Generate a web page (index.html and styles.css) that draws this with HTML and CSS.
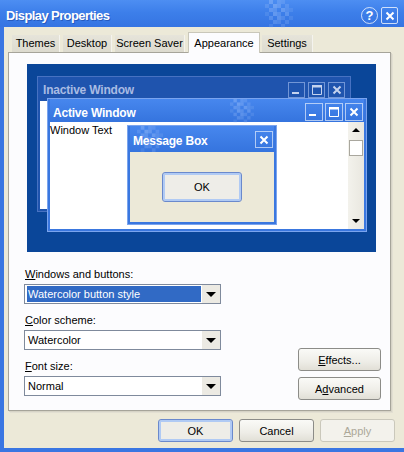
FILE: index.html
```html
<!DOCTYPE html>
<html>
<head>
    <title>Display Properties</title>
    <meta name="viewport" content="width=device-width, initial-scale=1">
    <link rel="stylesheet" href="styles.css">
</head>
<body>

<!-- shared glyphs -->
<svg class="defs" width="0" height="0">
    <defs>
        <symbol id="dither" viewBox="0 0 28 28">
            <g fill="#a9c8fb">
                <rect x="4" y="0" width="4" height="4" opacity=".35"/>
                <rect x="12" y="0" width="4" height="4" opacity=".25"/>
                <rect x="16" y="0" width="4" height="4" opacity=".2"/>
                <rect x="0" y="4" width="4" height="4" opacity=".2"/>
                <rect x="8" y="4" width="4" height="4" opacity=".4"/>
                <rect x="12" y="4" width="4" height="4" opacity=".3"/>
                <rect x="20" y="4" width="4" height="4" opacity=".2"/>
                <rect x="4" y="8" width="4" height="4" opacity=".3"/>
                <rect x="8" y="8" width="4" height="4" opacity=".25"/>
                <rect x="16" y="8" width="4" height="4" opacity=".35"/>
                <rect x="20" y="8" width="4" height="4" opacity=".2"/>
                <rect x="24" y="8" width="4" height="4" opacity=".15"/>
                <rect x="0" y="12" width="4" height="4" opacity=".15"/>
                <rect x="8" y="12" width="4" height="4" opacity=".35"/>
                <rect x="12" y="12" width="4" height="4" opacity=".25"/>
                <rect x="20" y="12" width="4" height="4" opacity=".3"/>
                <rect x="4" y="16" width="4" height="4" opacity=".25"/>
                <rect x="12" y="16" width="4" height="4" opacity=".3"/>
                <rect x="16" y="16" width="4" height="4" opacity=".2"/>
                <rect x="24" y="16" width="4" height="4" opacity=".15"/>
                <rect x="8" y="20" width="4" height="4" opacity=".25"/>
                <rect x="12" y="20" width="4" height="4" opacity=".2"/>
                <rect x="20" y="20" width="4" height="4" opacity=".2"/>
                <rect x="4" y="24" width="4" height="4" opacity=".15"/>
                <rect x="16" y="24" width="4" height="4" opacity=".2"/>
            </g>
        </symbol>
        <symbol id="glyph-close" viewBox="0 0 10 10">
            <path d="M1.5 1.5L8.5 8.5M8.5 1.5L1.5 8.5" stroke="currentColor" stroke-width="2" fill="none"/>
        </symbol>
        <symbol id="glyph-min" viewBox="0 0 10 10">
            <rect x="0" y="7" width="7" height="2" fill="currentColor"/>
        </symbol>
        <symbol id="glyph-max" viewBox="0 0 10 10">
            <path d="M0.5 1.5H9.5V9.5H0.5Z" stroke="currentColor" stroke-width="1" fill="none"/>
            <rect x="0" y="0" width="10" height="2.5" fill="currentColor"/>
        </symbol>
    </defs>
</svg>

<div class="window">
    <div class="titlebar">
        <svg class="dither main-dither"><use href="#dither"/></svg>
        <span class="title">Display Properties</span>
        <div class="caption">
            <span class="cap-btn help">?</span>
            <span class="cap-btn close"><svg><use href="#glyph-close"/></svg></span>
        </div>
    </div>

    <div class="client">
        <div class="tabs">
            <div class="tab tab-themes">Themes</div>
            <div class="tab tab-desktop">Desktop</div>
            <div class="tab tab-saver">Screen Saver</div>
            <div class="tab tab-appearance selected">Appearance</div>
            <div class="tab tab-settings">Settings</div>
        </div>

        <div class="panel">
            <div class="preview">
                <div class="pv-win inactive">
                    <div class="pv-title">
                        <span class="pv-caption">Inactive Window</span>
                        <div class="pv-buttons">
                            <span class="pv-btn"><svg><use href="#glyph-min"/></svg></span>
                            <span class="pv-btn"><svg><use href="#glyph-max"/></svg></span>
                            <span class="pv-btn"><svg><use href="#glyph-close"/></svg></span>
                        </div>
                    </div>
                    <div class="pv-body"></div>
                </div>

                <div class="pv-win active">
                    <div class="pv-title">
                        <svg class="dither"><use href="#dither"/></svg>
                        <span class="pv-caption">Active Window</span>
                        <div class="pv-buttons">
                            <span class="pv-btn"><svg><use href="#glyph-min"/></svg></span>
                            <span class="pv-btn"><svg><use href="#glyph-max"/></svg></span>
                            <span class="pv-btn"><svg><use href="#glyph-close"/></svg></span>
                        </div>
                    </div>
                    <div class="pv-body">
                        <div class="pv-text">Window Text</div>
                        <div class="scrollbar">
                            <div class="sb-arrow"><span class="arrow-up"></span></div>
                            <div class="sb-thumb"></div>
                            <div class="sb-track"></div>
                            <div class="sb-arrow"><span class="arrow-down"></span></div>
                        </div>
                    </div>
                </div>

                <div class="pv-win msgbox">
                    <div class="pv-title">
                        <svg class="dither"><use href="#dither"/></svg>
                        <span class="pv-caption">Message Box</span>
                        <div class="pv-buttons">
                            <span class="pv-btn"><svg><use href="#glyph-close"/></svg></span>
                        </div>
                    </div>
                    <div class="msg-body">
                        <div class="btn default msg-ok">OK</div>
                    </div>
                </div>
            </div>

            <div class="options">
                <div class="fields">
                    <label class="field-label"><u>W</u>indows and buttons:</label>
                    <div class="combo">
                        <div class="value"><span class="highlight">Watercolor button style</span></div>
                        <div class="drop"><span class="arrow-down big"></span></div>
                    </div>

                    <label class="field-label"><u>C</u>olor scheme:</label>
                    <div class="combo">
                        <div class="value"><span>Watercolor</span></div>
                        <div class="drop"><span class="arrow-down big"></span></div>
                    </div>

                    <label class="field-label"><u>F</u>ont size:</label>
                    <div class="combo">
                        <div class="value"><span>Normal</span></div>
                        <div class="drop"><span class="arrow-down big"></span></div>
                    </div>
                </div>

                <div class="side-buttons">
                    <div class="btn side"><u>E</u>ffects...</div>
                    <div class="btn side">A<u>d</u>vanced</div>
                </div>
            </div>
        </div>

        <div class="dialog-buttons">
            <div class="btn default">OK</div>
            <div class="btn">Cancel</div>
            <div class="btn disabled"><u>A</u>pply</div>
        </div>
    </div>
</div>

</body>
</html>
```

FILE: styles.css
```css
* { box-sizing: border-box; }
body { margin: 0; font-family: "Liberation Sans", Arial, sans-serif; font-size: 11px; color: #000; background: #ece9d8; }
.defs { position: absolute; }

/* outer frame */
.window { width: 404px; height: 452px; display: flex; flex-direction: column; background: #3a76e2; }
.titlebar { position: relative; height: 27px; display: flex; align-items: flex-start; background: linear-gradient(#4d8ef2, #3d7fea 45%, #3574e2); }
.title { position: relative; margin: 8px 0 0 6px; line-height: 15px; font-size: 13px; font-weight: bold; letter-spacing: -0.6px; color: #fff; text-shadow: 1px 1px 0 rgba(20, 60, 150, 0.5); }
.dither { position: absolute; top: 0; width: 28px; height: 28px; pointer-events: none; }
.main-dither { left: 265px; }
.caption { position: relative; display: flex; gap: 3px; margin: 7px 6px 0 auto; }
.cap-btn { width: 17px; height: 17px; display: flex; align-items: center; justify-content: center; border: 1px solid rgba(255, 255, 255, 0.75); color: #fff; }
.cap-btn.help { border-radius: 50%; font-size: 13px; font-weight: bold; line-height: 15px; }
.cap-btn.close { border-radius: 2px; }
.cap-btn svg { width: 10px; height: 10px; }

.client { flex: 1; display: flex; flex-direction: column; margin: 0 0 4px 4px; background: #ece9d8; }

/* tab strip */
.tabs { display: flex; align-items: flex-end; gap: 3px; height: 21px; margin: 5px 0 0 8px; }
.tab { height: 17px; margin-bottom: 1px; text-align: center; line-height: 17px; white-space: nowrap; background: linear-gradient(#e6e4da, #dddbcf); border-right: 1px solid #f4f3ee; }
.tab-themes { width: 48px; }
.tab-desktop { width: 49px; }
.tab-saver { width: 70px; }
.tab-appearance { width: 72px; }
.tab-settings { width: 51px; margin-left: -1px; }
.tab.selected { position: relative; z-index: 1; height: 21px; margin-bottom: 0; line-height: 20px; background: #fcfcfe; border: 1px solid #c9c7ba; border-bottom: none; }

.panel { position: relative; width: 383px; height: 359px; margin: -1px 0 0 4px; background: #fcfcfe; border: 1px solid #a6a49a; box-shadow: 1px 1px 0 #d6d3c6, 2px 2px 0 #e2dfd2; }

/* scheme preview */
.preview { position: relative; width: 349px; height: 188px; margin: 11px 0 0 18px; background: #0a4699; overflow: hidden; }
.pv-win { position: absolute; display: flex; flex-direction: column; padding: 0 2px 2px; border: 1px solid; }
.pv-title { position: relative; display: flex; align-items: flex-start; }
.pv-caption { position: relative; margin-left: 3px; line-height: 14px; font-size: 12px; font-weight: bold; letter-spacing: -0.2px; }
.pv-buttons { position: relative; display: flex; margin-left: auto; }
.pv-btn { display: flex; align-items: center; justify-content: center; border: 1px solid; }
.pv-btn svg { width: 10px; height: 10px; }
.pv-body { flex: 1; display: flex; background: #fff; }

.inactive { left: 10px; top: 12px; width: 314px; height: 136px; background: #1f54ae; border-color: #4772c2; }
.inactive .pv-title { height: 24px; }
.inactive .pv-caption { margin-top: 6px; color: #a9bbe3; }
.inactive .pv-buttons { gap: 3px; margin: 5px 3px 0 auto; }
.inactive .pv-btn { width: 17px; height: 16px; border-color: rgba(170, 195, 240, 0.6); color: #c5d3ee; }

.active { left: 20px; top: 34px; width: 320px; height: 134px; background: #3a77df; border-color: #7aa4ee; }
.active .pv-title { height: 23px; background: linear-gradient(#4787ee, #3574de); }
.active .dither { left: 178px; height: 24px; }
.active .pv-caption { margin-top: 7px; color: #fff; }
.active .pv-buttons { gap: 2px; margin: 4px 1px 0 auto; }
.active .pv-btn { width: 18px; height: 18px; border-color: rgba(255, 255, 255, 0.6); color: #fff; }
.pv-text { flex: 1; padding-top: 2px; line-height: 13px; }

.scrollbar { width: 16px; display: flex; flex-direction: column; background: linear-gradient(90deg, #f3f2ec, #e9e7df); }
.sb-arrow { height: 16px; display: flex; align-items: center; justify-content: center; }
.sb-thumb { height: 16px; margin: 2px 1px 0; background: #fff; border: 1px solid #a9a79e; }
.sb-track { flex: 1; }
.arrow-up { width: 0; height: 0; border-left: 4px solid transparent; border-right: 4px solid transparent; border-bottom: 4px solid #000; }
.arrow-down { width: 0; height: 0; border-left: 4px solid transparent; border-right: 4px solid transparent; border-top: 4px solid #000; }
.arrow-down.big { border-left-width: 5px; border-right-width: 5px; border-top-width: 5px; }

.msgbox { left: 100px; top: 61px; width: 150px; height: 100px; background: #3a77df; border-color: #7aa4ee; }
.msgbox .pv-title { height: 26px; background: linear-gradient(#4787ee, #3574de); }
.msgbox .dither { left: 6px; height: 26px; }
.msgbox .pv-caption { margin-top: 8px; color: #fff; }
.msgbox .pv-buttons { margin: 5px 1px 0 auto; }
.msgbox .pv-btn { width: 18px; height: 17px; border-color: rgba(255, 255, 255, 0.6); color: #fff; }
.msg-body { flex: 1; display: flex; align-items: center; justify-content: center; background: #ece9d8; }
.btn.msg-ok { width: 80px; height: 30px; }

/* option fields */
.options { display: flex; justify-content: space-between; align-items: flex-end; margin-top: 16px; padding: 0 9px 0 15px; }
.fields { width: 197px; padding-bottom: 4px; }
.field-label { display: block; margin-top: 10px; padding-left: 1px; line-height: 13px; }
.field-label:first-child { margin-top: 0; }
.combo { display: flex; height: 20px; margin-top: 3px; background: #fff; border: 1px solid #7f8a9c; }
.combo .value { flex: 1; padding: 1px 1px 1px 2px; line-height: 16px; }
.combo .value span { display: block; padding-left: 1px; }
.combo .highlight { background: #316ac5; color: #fff; }
.drop { width: 18px; display: flex; align-items: center; justify-content: center; background: #eceae3; }
.side-buttons { display: flex; flex-direction: column; gap: 6px; }

/* push buttons */
.btn { width: 75px; height: 23px; display: flex; align-items: center; justify-content: center; border: 1px solid #8c8c88; border-radius: 3px; background: linear-gradient(#fafaf7, #eeede7 60%, #e1dfd6); }
.btn.side { width: 83px; }
.btn.default { border-color: #6a89cc; box-shadow: inset 0 0 0 2px #b0caf4; background: #eeede8; }
.btn.disabled { border-color: #cac8bb; background: #f3f2ec; color: #aca899; }

.dialog-buttons { display: flex; justify-content: flex-end; gap: 6px; margin-top: 8px; padding-right: 9px; }
```
